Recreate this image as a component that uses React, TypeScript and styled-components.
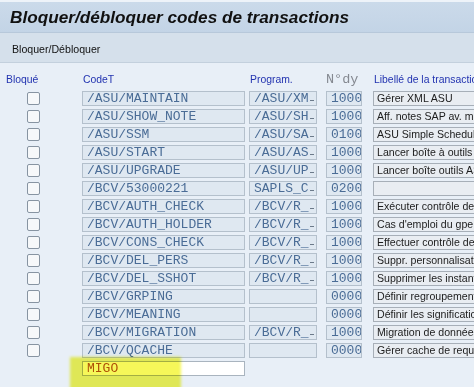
import React from "react";
import styled, { createGlobalStyle } from "styled-components";

interface RowData {
  code: string;
  prog?: string;
  cut?: boolean;
  dy: string;
  text: string;
}

const rows: RowData[] = [
  { code: "/ASU/MAINTAIN", prog: "/ASU/XM", cut: true, dy: "1000", text: "Gérer XML ASU" },
  { code: "/ASU/SHOW_NOTE", prog: "/ASU/SH", cut: true, dy: "1000", text: "Aff. notes SAP av. mise à niveau" },
  { code: "/ASU/SSM", prog: "/ASU/SA", cut: true, dy: "0100", text: "ASU Simple Scheduling Manager" },
  { code: "/ASU/START", prog: "/ASU/AS", cut: true, dy: "1000", text: "Lancer boîte à outils ASU" },
  { code: "/ASU/UPGRADE", prog: "/ASU/UP", cut: true, dy: "1000", text: "Lancer boîte outils ASU (upgrade)" },
  { code: "/BCV/53000221", prog: "SAPLS_C", cut: true, dy: "0200", text: "" },
  { code: "/BCV/AUTH_CHECK", prog: "/BCV/R_", cut: true, dy: "1000", text: "Exécuter contrôle des autorisations" },
  { code: "/BCV/AUTH_HOLDER", prog: "/BCV/R_", cut: true, dy: "1000", text: "Cas d'emploi du gpe d'autorisations" },
  { code: "/BCV/CONS_CHECK", prog: "/BCV/R_", cut: true, dy: "1000", text: "Effectuer contrôle de cohérence" },
  { code: "/BCV/DEL_PERS", prog: "/BCV/R_", cut: true, dy: "1000", text: "Suppr. personnalisation" },
  { code: "/BCV/DEL_SSHOT", prog: "/BCV/R_", cut: true, dy: "1000", text: "Supprimer les instantanés" },
  { code: "/BCV/GRPING", dy: "0000", text: "Définir regroupements" },
  { code: "/BCV/MEANING", dy: "0000", text: "Définir les significations" },
  { code: "/BCV/MIGRATION", prog: "/BCV/R_", cut: true, dy: "1000", text: "Migration de données" },
  { code: "/BCV/QCACHE", dy: "0000", text: "Gérer cache de requêtes" },
];

const GlobalStyle = createGlobalStyle`
  html, body {
    margin: 0;
    padding: 0;
    background: #e8eff7;
    overflow: hidden;
  }
`;

const Page = styled.div`
  position: relative;
  width: 474px;
  height: 387px;
  overflow: hidden;
  font-family: "Liberation Sans", Arial, sans-serif;
  background: #e8eff7;
`;

const TitleBar = styled.div`
  height: 30px;
  border-top: 2px solid #eef3f9;
  background: linear-gradient(#cbdaea, #c3d4e6);
  border-bottom: 1px solid #b7c8da;
  display: flex;
  align-items: center;
  padding-left: 10px;
`;

const Title = styled.h1`
  margin: 0;
  font-size: 17.2px;
  font-weight: bold;
  font-style: italic;
  color: #111;
`;

const ToolBar = styled.div`
  height: 30px;
  background: #d5e0eb;
  border-bottom: 1px solid #c3d0dd;
  display: flex;
  align-items: center;
  padding: 3px 0 0 12px;
  box-sizing: border-box;
  font-size: 10.6px;
  color: #111;
`;

const Table = styled.div`
  display: grid;
  grid-template-columns: 77px 167px 77px 47px 1fr;
  grid-auto-rows: 15px;
  row-gap: 3px;
  padding: 10px 0 0 5px;
`;

const Row = styled.div`
  display: contents;
`;

const Head = styled.div<{ $mono?: boolean }>`
  height: 18px;
  margin-top: -3px;
  display: flex;
  align-items: center;
  white-space: nowrap;
  font-size: ${(p) => (p.$mono ? "13.5px" : "10.4px")};
  font-family: ${(p) =>
    p.$mono ? '"Liberation Mono", "Courier New", monospace' : '"Liberation Sans", Arial, sans-serif'};
  color: ${(p) => (p.$mono ? "#858991" : "#2233b0")};
  padding-left: ${(p) => (p.$mono ? "0" : "1px")};
`;

const CheckCell = styled.div`
  display: flex;
  align-items: center;
  padding-left: 22px;
`;

const Check = styled.span`
  width: 11px;
  height: 11px;
  border: 1px solid #8794a2;
  border-radius: 2px;
  background: #f6f8fa;
`;

const Field = styled.div<{ $w: number; $input?: boolean }>`
  box-sizing: border-box;
  width: ${(p) => p.$w}px;
  height: 15px;
  line-height: 14px;
  padding-left: 4px;
  background: ${(p) => (p.$input ? "#ffffff" : "#dfe8f1")};
  border: 1px solid ${(p) => (p.$input ? "#a9b4bf" : "#b4c0cc")};
  font-family: "Liberation Mono", "Courier New", monospace;
  font-size: 13px;
  color: ${(p) => (p.$input ? "#b5520e" : "#4a6c96")};
  white-space: nowrap;
  overflow: hidden;
`;

const TextField = styled.div`
  box-sizing: border-box;
  width: 140px;
  height: 15px;
  line-height: 13px;
  padding-left: 3px;
  background: #e9edf2;
  border: 1px solid #a7afb8;
  font-size: 10.6px;
  color: #1c1c1c;
  white-space: nowrap;
  overflow: hidden;
`;

const Trunc = styled.span`
  display: inline-block;
  width: 4px;
  height: 1px;
  margin-left: 1px;
  background: #6c7a8a;
  vertical-align: 1px;
`;

const Highlight = styled.div`
  position: absolute;
  left: 70px;
  top: 357px;
  width: 111px;
  height: 40px;
  background: rgba(244, 246, 60, 0.85);
  filter: blur(1.5px);
  mix-blend-mode: multiply;
  pointer-events: none;
`;

export default function App() {
  return (
    <Page>
      <GlobalStyle />
      <TitleBar>
        <Title>Bloquer/débloquer codes de transactions</Title>
      </TitleBar>
      <ToolBar>Bloquer/Débloquer</ToolBar>
      <Table>
        <Row>
          <Head>Bloqué</Head>
          <Head>CodeT</Head>
          <Head>Program.</Head>
          <Head $mono>N°dy</Head>
          <Head>Libellé de la transaction</Head>
        </Row>
        {rows.map((r) => (
          <Row key={r.code}>
            <CheckCell>
              <Check />
            </CheckCell>
            <Field $w={163}>{r.code}</Field>
            <Field $w={68}>
              {r.prog}
              {r.cut && <Trunc />}
            </Field>
            <Field $w={36}>{r.dy}</Field>
            <TextField>{r.text}</TextField>
          </Row>
        ))}
        <Row>
          <div />
          <Field $w={163} $input>
            MIGO
          </Field>
        </Row>
      </Table>
      <Highlight />
    </Page>
  );
}
